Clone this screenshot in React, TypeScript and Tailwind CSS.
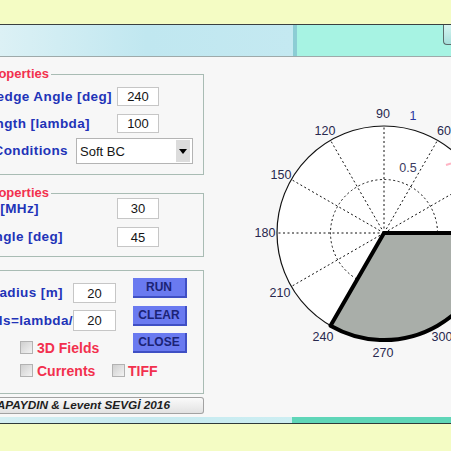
import React from "react"

// MATLAB-style GUI: wedge diffraction panel with a polar pattern on the right

function Field({ value, className }: { value: string; className: string }) {
  return (
    <input
      readOnly
      value={value}
      className={`border border-[#c6c6c6] bg-white text-center text-[13px] leading-none text-[#151515] outline-none ${className}`}
    />
  )
}

function Label({ text, className }: { text: string; className: string }) {
  return (
    <div className={`flex shrink-0 justify-end ${className}`}>
      <span className="shrink-0 whitespace-nowrap text-[13.5px] font-bold leading-none tracking-[0.4px] text-[#2233b8]">{text}</span>
    </div>
  )
}

function Panel({ title, className, children }: { title?: string; className: string; children: React.ReactNode }) {
  return (
    <div className={`relative border-y border-r border-[#a9bcb4] ${className}`}>
      {title && (
        <div className="absolute -top-[8px] right-[152px] whitespace-nowrap bg-[#f7f7f7] pr-[2px] text-[13px] font-bold leading-none text-[#f2304e]">
          {title}
        </div>
      )}
      {children}
    </div>
  )
}

function Check() {
  return <div className="h-[13px] w-[13px] shrink-0 border border-[#b2b2b2] bg-gradient-to-br from-[#cfcfcf] to-[#f3f3f3]" />
}

function BlueButton({ text, className }: { text: string; className: string }) {
  return (
    <div
      className={`flex h-[20px] w-[54px] items-center justify-center border-b-2 border-r-2 border-[#3f4fc4] bg-[#6a7af0] text-[12px] font-bold leading-none text-[#1b2375] ${className}`}
    >
      {text}
    </div>
  )
}

function PolarPlot() {
  const cx = 384
  const cy = 233
  const r = 107
  const spokes = [0, 30, 60, 90, 120, 150, 180, 210, 240, 270, 300, 330]
  const labels: [string, number, number][] = [
    ["90", 383, 114],
    ["120", 325, 131],
    ["60", 444, 131],
    ["150", 281, 175],
    ["180", 265, 233],
    ["210", 280, 293],
    ["240", 323, 337],
    ["270", 383, 353],
    ["300", 442, 337],
  ]
  const rad = (d: number) => (d * Math.PI) / 180
  const p240 = [cx + r * Math.cos(rad(240)), cy - r * Math.sin(rad(240))]

  return (
    <svg width="247" height="360" viewBox="204 57 247 360" className="shrink-0 overflow-visible">
      <circle cx={cx} cy={cy} r={r} fill="#ffffff" stroke="#111" strokeWidth="1.2" />
      <circle cx={cx} cy={cy} r={r / 2} fill="none" stroke="#111" strokeWidth="1" strokeDasharray="2 2.5" />
      {spokes.map((a) => (
        <line
          key={a}
          x1={cx}
          y1={cy}
          x2={cx + r * Math.cos(rad(a))}
          y2={cy - r * Math.sin(rad(a))}
          stroke="#111"
          strokeWidth="1"
          strokeDasharray="2 2.5"
        />
      ))}
      <path
        d={`M ${cx} ${cy} L ${p240[0]} ${p240[1]} A ${r} ${r} 0 0 0 ${cx + r} ${cy} Z`}
        fill="#a9aea9"
        stroke="#000"
        strokeWidth="4"
        strokeLinejoin="round"
      />
      <line x1="446" y1="165" x2="451" y2="163.5" stroke="#ffb4c4" strokeWidth="2" />
      {labels.map(([t, x, y]) => (
        <text
          key={t}
          x={x}
          y={y}
          textAnchor="middle"
          dominantBaseline="central"
          fontSize="12.5"
          fontFamily="'Liberation Sans', Arial, sans-serif"
          fill="#28284e"
        >
          {t}
        </text>
      ))}
      <text x="413" y="116" textAnchor="middle" dominantBaseline="central" fontSize="12.5" fontFamily="'Liberation Sans', Arial, sans-serif" fill="#2a36a0">
        1
      </text>
      <text x="408" y="168" textAnchor="middle" dominantBaseline="central" fontSize="12.5" fontFamily="'Liberation Sans', Arial, sans-serif" fill="#3c3c60">
        0.5
      </text>
    </svg>
  )
}

export default function App() {
  return (
    <div className="flex h-[451px] w-[451px] flex-col overflow-hidden bg-[#f4fcc4] font-['Liberation_Sans',Arial,sans-serif]">
      <div className="h-[24px] shrink-0" />
      <div className="h-px shrink-0 bg-[#3a4040]" />

      {/* title bar */}
      <div className="flex h-[31px] shrink-0">
        <div className="w-[293px] bg-gradient-to-r from-[#dcf1f5] via-[#c0e7f0] to-[#c4e9f1]" />
        <div className="w-[4px] bg-[#8ccdd4]" />
        <div className="relative flex-1 bg-[#a7f3e3]">
          <div className="absolute right-0 top-0 h-[20px] w-[8px] rounded-bl-[4px] border-b border-l border-[#5a6a6a] bg-gradient-to-b from-[#d6f5f1] to-[#a6dfdb]" />
        </div>
      </div>
      <div className="h-px shrink-0 bg-[#9eaaaa]" />

      {/* window body */}
      <div className="flex h-[360px] shrink-0 bg-[#f7f7f7]">
        <div className="flex w-[204px] shrink-0 flex-col pt-[17px]">
          <Panel title="Wedge Properties" className="h-[101px] pt-[12px]">
            <div className="flex h-[19px] items-center">
              <Label text="Wedge Angle [deg]" className="w-[112px]" />
              <Field value="240" className="ml-[5px] h-[19px] w-[42px]" />
            </div>
            <div className="mt-[8px] flex h-[19px] items-center">
              <Label text="Length [lambda]" className="w-[90px]" />
              <Field value="100" className="ml-[27px] h-[19px] w-[42px]" />
            </div>
            <div className="mt-[5px] flex h-[26px] items-center">
              <Label text="Boundary Conditions" className="w-[68px]" />
              <div className="ml-[8px] flex h-[26px] w-[117px] items-center border border-[#b4b4b4] bg-white pl-[3px] pr-[2px]">
                <span className="flex-1 text-[13px] leading-none text-[#151515]">Soft BC</span>
                <div className="flex h-[22px] w-[14px] items-center justify-center bg-[#dcdcdc]">
                  <svg width="8" height="5" viewBox="0 0 8 5">
                    <path d="M0 0 H8 L4 5 Z" fill="#000" />
                  </svg>
                </div>
              </div>
            </div>
          </Panel>

          <Panel title="Source Properties" className="mt-[18px] h-[64px] pt-[4px]">
            <div className="flex h-[21px] items-center">
              <Label text="Frequency [MHz]" className="w-[39px]" />
              <Field value="30" className="ml-[78px] h-[21px] w-[42px]" />
            </div>
            <div className="mt-[8px] flex h-[20px] items-center">
              <Label text="Incidence Angle [deg]" className="w-[63px]" />
              <Field value="45" className="ml-[54px] h-[20px] w-[42px]" />
            </div>
          </Panel>

          <Panel className="mt-[13px] flex h-[124px]">
            <div className="w-[133px] shrink-0 pt-[12px]">
              <div className="flex h-[20px] items-center">
                <Label text="Observation Radius [m]" className="w-[63px]" />
                <Field value="20" className="ml-[10px] h-[20px] w-[43px]" />
              </div>
              <div className="mt-[7px] flex h-[21px] items-center">
                <Label text="Pixels=lambda/" className="w-[73px]" />
                <Field value="20" className="h-[21px] w-[43px]" />
              </div>
              <div className="mt-[10px] flex h-[13px] items-center pl-[20px]">
                <Check />
                <span className="ml-[4px] whitespace-nowrap text-[14px] font-bold leading-none text-[#f2304e]">3D Fields</span>
              </div>
              <div className="mt-[10px] flex h-[13px] items-center">
                <div className="flex w-[112px] shrink-0 items-center pl-[20px]">
                  <Check />
                  <span className="ml-[4px] whitespace-nowrap text-[14px] font-bold leading-none text-[#f2304e]">Currents</span>
                </div>
                <Check />
                <span className="ml-[3px] whitespace-nowrap text-[14px] font-bold leading-none text-[#f2304e]">TIFF</span>
              </div>
            </div>
            <div className="flex flex-col pt-[7px]">
              <BlueButton text="RUN" className="" />
              <BlueButton text="CLEAR" className="mt-[8px]" />
              <BlueButton text="CLOSE" className="mt-[7px]" />
            </div>
          </Panel>

          <div className="mt-[3px] flex h-[17px] w-[204px] items-center justify-end rounded-r-[3px] border-y border-r border-[#a2a2a2] bg-gradient-to-b from-[#fafafa] to-[#e2e2e2] pr-[33px]">
            <span className="shrink-0 whitespace-nowrap text-[11.8px] font-bold italic leading-none text-[#1e1e1e]">
              Gökhan APAYDIN &amp; Levent SEVGİ 2016
            </span>
          </div>
        </div>

        <PolarPlot />
      </div>

      {/* bottom frame */}
      <div className="flex h-[6px] shrink-0">
        <div className="w-[292px] bg-gradient-to-r from-[#d4eff3] via-[#c6eaf0] to-[#cdeef2]" />
        <div className="flex-1 bg-[#5fd6b8]" />
      </div>
      <div className="h-px shrink-0 bg-[#2f3a3a]" />
    </div>
  )
}
